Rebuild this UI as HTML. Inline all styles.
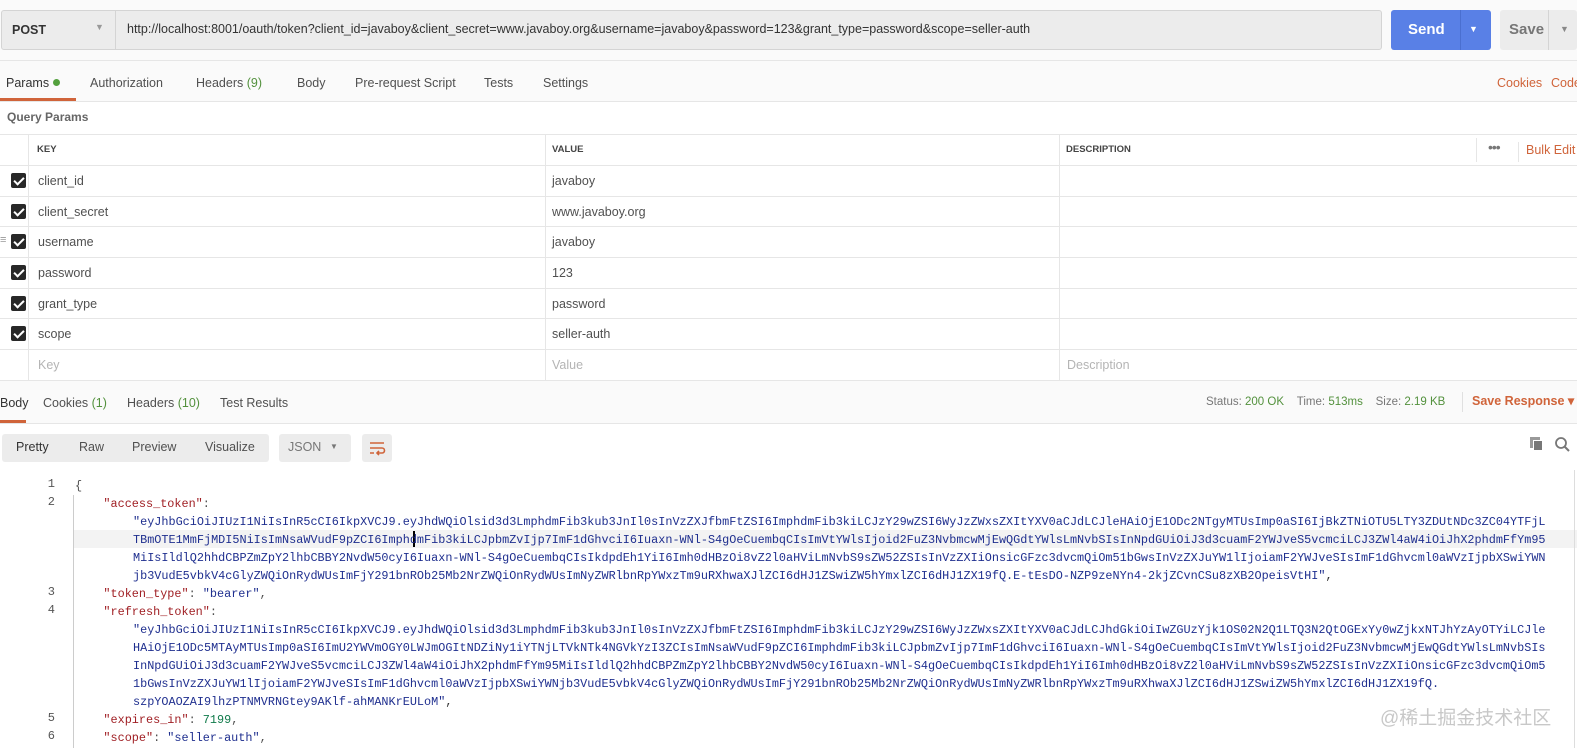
<!DOCTYPE html>
<html><head><meta charset="utf-8"><style>
*{box-sizing:border-box;margin:0;padding:0}
body{width:1577px;height:748px;overflow:hidden;background:#fff;font-family:"Liberation Sans","Noto Sans CJK SC",sans-serif;font-size:12.5px;color:#505050;position:relative}
.a{position:absolute;white-space:nowrap}
.hl{position:absolute;left:0;width:1577px;height:1px;background:#e6e6e6}
.cb{position:absolute;left:11px;width:15px;height:15px;background:#282828;border-radius:2px}
.cb:after{content:"";position:absolute;left:5px;top:2px;width:4px;height:8px;border:solid #fff;border-width:0 2px 2px 0;transform:rotate(45deg)}
.g{color:#53913d}
.code{position:absolute;font-family:"Liberation Mono",monospace;font-size:11.84px;white-space:pre;line-height:18px}
.k{color:#a01f24}.s{color:#1f2f8f}.n{color:#0f7a4a}
.ln{position:absolute;left:0;width:55px;text-align:right;font-family:"Liberation Mono",monospace;font-size:12px;color:#555}
</style></head><body>
<div class="a" style="left:0;top:0;width:1577px;height:60px;background:#fafafa"></div>
<div class="a" style="left:1px;top:10px;width:1381px;height:40px;background:#ececec;border:1px solid #d4d4d4;border-radius:3px"></div>
<div class="a" style="left:115px;top:11px;width:1px;height:38px;background:#d4d4d4"></div>
<div class="a" style="left:12px;top:23px;font-weight:bold;color:#333;font-size:12.5px">POST</div>
<div class="a" style="left:95px;top:22px;color:#999;font-size:9px">▼</div>
<div class="a" style="left:127px;top:22px;color:#333;font-size:12.5px">http://localhost:8001/oauth/token?client_id=javaboy&amp;client_secret=www.javaboy.org&amp;username=javaboy&amp;password=123&amp;grant_type=password&amp;scope=seller-auth</div>
<div class="a" style="left:1391px;top:10px;width:100px;height:40px;background:#5980e6;border-radius:3px"></div>
<div class="a" style="left:1460px;top:10px;width:1px;height:40px;background:#4a6fd0"></div>
<div class="a" style="left:1408px;top:21px;color:#fff;font-weight:bold;font-size:15px">Send</div>
<div class="a" style="left:1469px;top:24px;color:#fff;font-size:9px">▼</div>
<div class="a" style="left:1500px;top:10px;width:77px;height:40px;background:#ececec;border-radius:3px"></div>
<div class="a" style="left:1548px;top:10px;width:1px;height:40px;background:#d4d4d4"></div>
<div class="a" style="left:1509px;top:21px;color:#777;font-weight:bold;font-size:15px">Save</div>
<div class="a" style="left:1560px;top:24px;color:#888;font-size:9px">▼</div>
<div class="hl" style="top:60px"></div>
<div class="a" style="left:0;top:61px;width:1577px;height:40px;background:#fafafa"></div>
<div class="a" style="left:6px;top:76px;color:#333">Params <span style="display:inline-block;width:7px;height:7px;border-radius:50%;background:#53a03d;vertical-align:1px"></span></div>
<div class="a" style="left:90px;top:76px">Authorization</div>
<div class="a" style="left:196px;top:76px">Headers <span class="g">(9)</span></div>
<div class="a" style="left:297px;top:76px">Body</div>
<div class="a" style="left:355px;top:76px">Pre-request Script</div>
<div class="a" style="left:484px;top:76px">Tests</div>
<div class="a" style="left:543px;top:76px">Settings</div>
<div class="a" style="left:1497px;top:76px;color:#d0643a">Cookies</div>
<div class="a" style="left:1551px;top:76px;color:#d0643a">Code</div>
<div class="a" style="left:0;top:98px;width:76px;height:3px;background:#d0643a"></div>
<div class="hl" style="top:101px"></div>
<div class="a" style="left:7px;top:110px;font-weight:bold;color:#666;font-size:12px">Query Params</div>
<div class="hl" style="top:134px"></div>
<div class="a" style="left:37px;top:144px;font-weight:bold;font-size:9.5px;color:#444">KEY</div>
<div class="a" style="left:552px;top:144px;font-weight:bold;font-size:9.5px;color:#444">VALUE</div>
<div class="a" style="left:1066px;top:144px;font-weight:bold;font-size:9.5px;color:#444">DESCRIPTION</div>
<div class="a" style="left:1488px;top:139px;color:#777;font-size:14px;letter-spacing:-1px">•••</div>
<div class="a" style="left:1518px;top:142px;width:1px;height:20px;background:#e6e6e6"></div>
<div class="a" style="left:1476px;top:138px;width:1px;height:24px;background:#e6e6e6"></div>
<div class="a" style="left:1526px;top:143px;color:#d0643a">Bulk Edit</div>
<div class="a" style="left:28px;top:134px;width:1px;height:246px;background:#e6e6e6"></div>
<div class="a" style="left:545px;top:134px;width:1px;height:246px;background:#e6e6e6"></div>
<div class="a" style="left:1059px;top:134px;width:1px;height:246px;background:#e6e6e6"></div>
<div class="hl" style="top:165px"></div><div class="hl" style="top:196px"></div><div class="hl" style="top:226px"></div><div class="hl" style="top:257px"></div><div class="hl" style="top:288px"></div><div class="hl" style="top:318px"></div><div class="hl" style="top:349px"></div><div class="hl" style="top:380px"></div>
<div class="cb" style="top:173px"></div><div class="cb" style="top:204px"></div><div class="cb" style="top:234px"></div><div class="cb" style="top:265px"></div><div class="cb" style="top:296px"></div><div class="cb" style="top:326px"></div>
<div class="a" style="left:0;top:234px;color:#999;font-size:11px">≡</div>
<div class="a" style="left:38px;top:174px">client_id</div><div class="a" style="left:552px;top:174px">javaboy</div>
<div class="a" style="left:38px;top:205px">client_secret</div><div class="a" style="left:552px;top:205px">www.javaboy.org</div>
<div class="a" style="left:38px;top:235px">username</div><div class="a" style="left:552px;top:235px">javaboy</div>
<div class="a" style="left:38px;top:266px">password</div><div class="a" style="left:552px;top:266px">123</div>
<div class="a" style="left:38px;top:297px">grant_type</div><div class="a" style="left:552px;top:297px">password</div>
<div class="a" style="left:38px;top:327px">scope</div><div class="a" style="left:552px;top:327px">seller-auth</div>
<div class="a" style="left:38px;top:358px;color:#b4b4b4">Key</div><div class="a" style="left:552px;top:358px;color:#b4b4b4">Value</div><div class="a" style="left:1067px;top:358px;color:#b4b4b4">Description</div>
<div class="a" style="left:0;top:381px;width:1577px;height:42px;background:#fafafa"></div>
<div class="a" style="left:0;top:396px;color:#333">Body</div>
<div class="a" style="left:43px;top:396px">Cookies <span class="g">(1)</span></div>
<div class="a" style="left:127px;top:396px">Headers <span class="g">(10)</span></div>
<div class="a" style="left:220px;top:396px">Test Results</div>
<div class="a" style="left:0;top:420px;width:26px;height:3px;background:#d0643a"></div>
<div class="a" style="left:1206px;top:396px;font-size:11.5px;color:#777">Status: <span class="g">200 OK</span>&nbsp;&nbsp;&nbsp;&nbsp;Time: <span class="g">513ms</span>&nbsp;&nbsp;&nbsp;&nbsp;Size: <span class="g">2.19 KB</span></div>
<div class="a" style="left:1462px;top:392px;width:1px;height:20px;background:#e0e0e0"></div>
<div class="a" style="left:1472px;top:393px;color:#d0643a;font-weight:bold;font-size:12.5px">Save Response ▾</div>
<div class="hl" style="top:423px"></div>
<div class="a" style="left:2px;top:434px;width:267px;height:28px;background:#ececec;border-radius:3px"></div>
<div class="a" style="left:16px;top:440px;color:#333">Pretty</div>
<div class="a" style="left:79px;top:440px">Raw</div>
<div class="a" style="left:132px;top:440px">Preview</div>
<div class="a" style="left:205px;top:440px">Visualize</div>
<div class="a" style="left:279px;top:434px;width:72px;height:28px;background:#ececec;border-radius:3px"></div>
<div class="a" style="left:288px;top:440px;color:#777">JSON</div>
<div class="a" style="left:330px;top:442px;color:#777;font-size:8px">▼</div>
<div class="a" style="left:362px;top:434px;width:30px;height:28px;background:#ececec;border-radius:3px"></div>
<svg class="a" style="left:368px;top:439px" width="18" height="18" viewBox="0 0 18 18"><path d="M2 4h14M2 9h12a2.5 2.5 0 0 1 0 5H9M2 14h4M11 12l-2 2 2 2" stroke="#d0643a" stroke-width="1.6" fill="none"/></svg>
<div class="a" style="left:1530px;top:437px;width:10px;height:11px;background:#999"></div>
<div class="a" style="left:1533px;top:440px;width:10px;height:11px;background:#777;border:1px solid #fff"></div>
<svg class="a" style="left:1554px;top:436px" width="16" height="16"><circle cx="7" cy="7" r="5" stroke="#777" stroke-width="1.8" fill="none"/><path d="M11 11l4 4" stroke="#777" stroke-width="2"/></svg>
<div class="a" style="left:73px;top:495px;width:1px;height:253px;background:#ccc"></div>
<div class="a" style="left:74px;top:530px;width:1503px;height:18px;background:#f3f3f3"></div>
<div class="a" style="left:413px;top:531px;width:1.5px;height:16px;background:#000"></div>
<div class="a" style="left:1574px;top:470px;width:1px;height:278px;background:#ddd"></div>
<div class="ln" style="top:477px">1</div><div class="ln" style="top:495px">2</div><div class="ln" style="top:585px">3</div><div class="ln" style="top:603px">4</div><div class="ln" style="top:711px">5</div><div class="ln" style="top:729px">6</div>
<div class="code" style="left:75px;top:477px">{
    <span class="k">"access_token"</span>:</div>
<div class="code s" style="left:133px;top:513px">"eyJhbGciOiJIUzI1NiIsInR5cCI6IkpXVCJ9.eyJhdWQiOlsid3d3LmphdmFib3kub3JnIl0sInVzZXJfbmFtZSI6ImphdmFib3kiLCJzY29wZSI6WyJzZWxsZXItYXV0aCJdLCJleHAiOjE1ODc2NTgyMTUsImp0aSI6IjBkZTNiOTU5LTY3ZDUtNDc3ZC04YTFjL
TBmOTE1MmFjMDI5NiIsImNsaWVudF9pZCI6ImphdmFib3kiLCJpbmZvIjp7ImF1dGhvciI6Iuaxn-WNl-S4gOeCuembqCIsImVtYWlsIjoid2FuZ3NvbmcwMjEwQGdtYWlsLmNvbSIsInNpdGUiOiJ3d3cuamF2YWJveS5vcmciLCJ3ZWl4aW4iOiJhX2phdmFfYm95
MiIsIldlQ2hhdCBPZmZpY2lhbCBBY2NvdW50cyI6Iuaxn-WNl-S4gOeCuembqCIsIkdpdEh1YiI6Imh0dHBzOi8vZ2l0aHViLmNvbS9sZW52ZSIsInVzZXIiOnsicGFzc3dvcmQiOm51bGwsInVzZXJuYW1lIjoiamF2YWJveSIsImF1dGhvcml0aWVzIjpbXSwiYWN
jb3VudE5vbkV4cGlyZWQiOnRydWUsImFjY291bnROb25Mb2NrZWQiOnRydWUsImNyZWRlbnRpYWxzTm9uRXhwaXJlZCI6dHJ1ZSwiZW5hYmxlZCI6dHJ1ZX19fQ.E-tEsDO-NZP9zeNYn4-2kjZCvnCSu8zXB2OpeisVtHI"<span style="color:#333">,</span></div>
<div class="code" style="left:75px;top:585px">    <span class="k">"token_type"</span>: <span class="s">"bearer"</span>,
    <span class="k">"refresh_token"</span>:</div>
<div class="code s" style="left:133px;top:621px">"eyJhbGciOiJIUzI1NiIsInR5cCI6IkpXVCJ9.eyJhdWQiOlsid3d3LmphdmFib3kub3JnIl0sInVzZXJfbmFtZSI6ImphdmFib3kiLCJzY29wZSI6WyJzZWxsZXItYXV0aCJdLCJhdGkiOiIwZGUzYjk1OS02N2Q1LTQ3N2QtOGExYy0wZjkxNTJhYzAyOTYiLCJle
HAiOjE1ODc5MTAyMTUsImp0aSI6ImU2YWVmOGY0LWJmOGItNDZiNy1iYTNjLTVkNTk4NGVkYzI3ZCIsImNsaWVudF9pZCI6ImphdmFib3kiLCJpbmZvIjp7ImF1dGhvciI6Iuaxn-WNl-S4gOeCuembqCIsImVtYWlsIjoid2FuZ3NvbmcwMjEwQGdtYWlsLmNvbSIs
InNpdGUiOiJ3d3cuamF2YWJveS5vcmciLCJ3ZWl4aW4iOiJhX2phdmFfYm95MiIsIldlQ2hhdCBPZmZpY2lhbCBBY2NvdW50cyI6Iuaxn-WNl-S4gOeCuembqCIsIkdpdEh1YiI6Imh0dHBzOi8vZ2l0aHViLmNvbS9sZW52ZSIsInVzZXIiOnsicGFzc3dvcmQiOm5
1bGwsInVzZXJuYW1lIjoiamF2YWJveSIsImF1dGhvcml0aWVzIjpbXSwiYWNjb3VudE5vbkV4cGlyZWQiOnRydWUsImFjY291bnROb25Mb2NrZWQiOnRydWUsImNyZWRlbnRpYWxzTm9uRXhwaXJlZCI6dHJ1ZSwiZW5hYmxlZCI6dHJ1ZX19fQ.
szpYOAOZAI9lhzPTNMVRNGtey9AKlf-ahMANKrEULoM"<span style="color:#333">,</span></div>
<div class="code" style="left:75px;top:711px">    <span class="k">"expires_in"</span>: <span class="n">7199</span>,
    <span class="k">"scope"</span>: <span class="s">"seller-auth"</span>,</div>
<div class="a" style="left:1380px;top:703px;color:#c8c8c8;font-size:19px;font-family:'Liberation Sans','Noto Sans CJK SC',sans-serif">@稀土掘金技术社区</div>
</body></html>
